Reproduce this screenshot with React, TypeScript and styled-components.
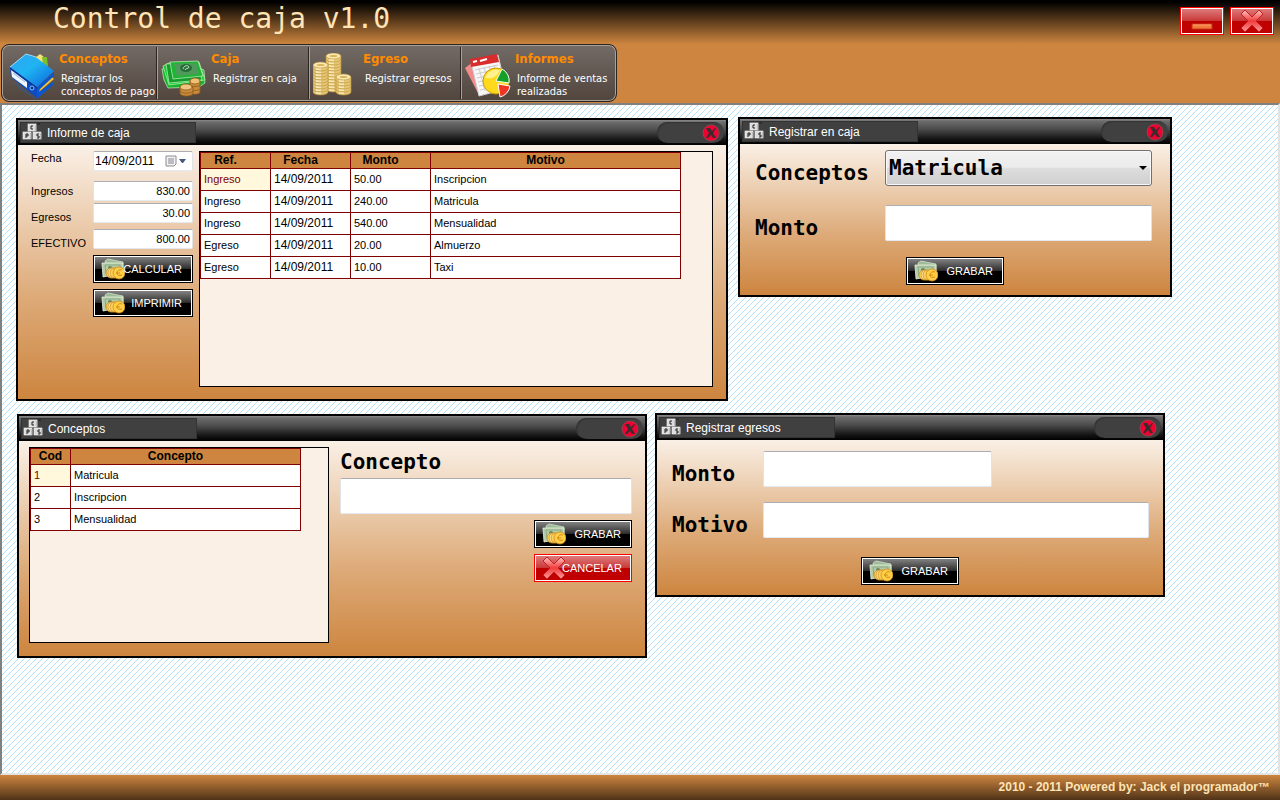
import React, { useState } from "react";
import styled, { createGlobalStyle } from "styled-components";

const peru = "#cd853f";
const linen = "#faf0e6";
const maroon = "#800000";
const sans = '"Liberation Sans", Arial, sans-serif';
const mono = '"DejaVu Sans Mono", Consolas, monospace';
const condensed = '"DejaVu Sans Condensed", Tahoma, "Open Sans", sans-serif';

const Global = createGlobalStyle`
  * { box-sizing: border-box; }
  body { margin: 0; background: ${peru}; font: 11px/14px ${sans}; color: #000; }
  button, input, select { font: inherit; color: inherit; margin: 0; }
  h1, h2, p { margin: 0; font-weight: normal; }
`;

const Page = styled.div`
  min-height: 100vh;
  display: flex;
  flex-direction: column;
`;

const Header = styled.header`
  background: linear-gradient(#000 0, #000 2px, ${peru} 44px);
`;

const TitleRow = styled.div`
  display: flex;
  justify-content: space-between;
  align-items: flex-start;
  height: 44px;
  padding: 0 6px 0 53px;
`;

const AppTitle = styled.h1`
  font: 28px/38px ${mono};
  color: #ffe4b5;
`;

const WindowControls = styled.div`
  display: flex;
  gap: 6px;
  padding-top: 7px;
`;

const glossyRed = "linear-gradient(#df8080 0, #cb3a3a 48%, #bf0000 50%, #c00000 100%)";
const glossyBlack = "linear-gradient(#8a8a8a 0, #2e2e2e 48%, #000 50%, #000 100%)";

const ControlButton = styled.button`
  width: 44px;
  height: 28px;
  padding: 0;
  border: 1px solid #f00;
  background: ${glossyRed};
  box-shadow: inset 0 0 0 1px #fff;
  display: flex;
  align-items: center;
  justify-content: center;
`;

const Toolbar = styled.nav`
  display: flex;
  width: fit-content;
  height: 58px;
  margin: 0 0 1px 1px;
  border: 1px solid #2c2420;
  border-radius: 8px;
  box-shadow: inset 0 0 0 1px #a8a09b;
  background: linear-gradient(#736b66, #51453d);
  padding: 2px 4px 2px 2px;
`;

const ToolItem = styled.button`
  display: flex;
  width: 152px;
  padding: 4px 0 0 5px;
  border: 0;
  background: none;
  text-align: left;
  & + & {
    border-left: 1px solid #2c2420;
    box-shadow: inset 1px 0 0 #a8a09b;
    padding-left: 4px;
  }
  svg { flex: none; margin-top: 2px; }
`;

const ToolText = styled.span`
  display: flex;
  flex-direction: column;
  padding-left: 4px;
`;

const ToolTitle = styled.span`
  font: bold 13px/16px ${condensed};
  color: #ff8c00;
`;

const ToolDescription = styled.span`
  font: 11px/13px ${condensed};
  color: #fff;
  padding: 5px 0 0 2px;
  white-space: pre;
`;

const Desktop = styled.main`
  position: relative;
  flex: 1;
  min-height: 560px;
  border: 2px solid;
  border-color: #808080 #e3e3e3 #e3e3e3 #808080;
  background: linear-gradient(135deg, #fff 0 47%, #b4e1fa 47% 53%, #fff 53%) 0 0 / 6px 6px;
`;

const Footer = styled.footer`
  padding: 0 10px;
  text-align: right;
  font: bold 12px/25px ${sans};
  color: #ffe4b5;
  background: linear-gradient(${peru}, #4f3318);
`;

const Frame = styled.section<{ $x: number; $y: number; $w: number; $h: number }>`
  position: absolute;
  left: ${(p) => p.$x}px;
  top: ${(p) => p.$y}px;
  width: ${(p) => p.$w}px;
  height: ${(p) => p.$h}px;
  display: flex;
  flex-direction: column;
  border: 2px solid #000;
  background: ${peru};
`;

const TitleBar = styled.div`
  display: flex;
  justify-content: space-between;
  flex: none;
  height: 25px;
  padding: 2px;
  background: linear-gradient(#8a8a8a 0, #6c6c6c 2px, #4c4c4c 10px, #141414 20px, #000 25px);
`;

const TitleTab = styled.div`
  display: flex;
  gap: 5px;
  width: 176px;
  padding: 0 0 0 1px;
  border: 1px solid #333;
  background: #404040;
`;

const FrameTitle = styled.h2`
  font: 12px/21px ${sans};
  color: #fff;
`;

const ClosePill = styled.div`
  display: flex;
  justify-content: flex-end;
  width: 67px;
  padding: 2px 4px;
  border-radius: 11px;
  background: #404040;
  box-shadow: inset 1px 1px 1px #333;
`;

const CloseButton = styled.button`
  width: 18px;
  height: 18px;
  padding: 0;
  border: 0;
  background: none;
  svg { display: block; }
`;

const Body = styled.div<{ $pad: string; $gap?: number }>`
  flex: 1;
  display: flex;
  align-items: flex-start;
  gap: ${(p) => p.$gap ?? 0}px;
  padding: ${(p) => p.$pad};
  background: linear-gradient(${linen}, #ddaa78 60%, ${peru});
`;

const LabelColumn = styled.div`
  display: grid;
  grid-template-rows: 33px 26px 26px 26px;
  width: 62px;
`;

const ControlColumn = styled.div`
  display: flex;
  flex-direction: column;
  gap: 6px;
  width: 100px;
  margin-right: 6px;
`;

const Pair = styled.div`
  display: flex;
  flex-direction: column;
  gap: 2px;
  padding-top: 4px;
`;

const TextField = styled.input<{ $big?: boolean; $width?: number }>`
  width: ${(p) => (p.$width ? p.$width + "px" : "100%")};
  height: ${(p) => (p.$big ? 36 : 20)}px;
  padding: 0 2px;
  border: 1px solid;
  border-color: #abadb3 #e2e3ea #e3e9ef #e2e3ea;
  border-radius: 2px;
  background: #fff;
  font: ${(p) => (p.$big ? `bold 21px ${mono}` : `11px ${sans}`)};
  text-align: ${(p) => (p.$big ? "left" : "right")};
`;

const DateBox = styled.div`
  display: flex;
  align-items: center;
  height: 20px;
  border: 1px solid;
  border-color: #abadb3 #e2e3ea #e3e9ef #e2e3ea;
  border-radius: 2px;
  background: #fff;
`;

const DateInput = styled.input`
  width: 71px;
  padding: 0 0 0 1px;
  border: 0;
  background: none;
  font: 12px ${sans};
`;

const DateButton = styled.button`
  padding: 0;
  border: 0;
  background: none;
  svg { display: block; }
`;

const ActionButton = styled.button<{ $danger?: boolean; $wide?: boolean }>`
  display: flex;
  align-items: center;
  justify-content: space-between;
  flex: none;
  width: ${(p) => (p.$wide ? 100 : 98)}px;
  height: 28px;
  padding: 0 10px 0 7px;
  border: 1px solid ${(p) => (p.$danger ? "#f00" : "#000")};
  background: ${(p) => (p.$danger ? glossyRed : glossyBlack)};
  box-shadow: inset 0 0 0 1px #fff;
  color: #fff;
  font: 11px/26px ${sans};
  svg { flex: none; margin-right: -4px; }
`;

const GridPanel = styled.div<{ $h: number }>`
  flex: 1;
  height: ${(p) => p.$h}px;
  border: 1px solid #000;
  background: ${linen};
`;

const Table = styled.table`
  border-collapse: collapse;
  table-layout: fixed;
  width: min-content;
`;

const Th = styled.th<{ $w: number }>`
  width: ${(p) => p.$w}px;
  height: 16px;
  padding: 0 ${(p) => (p.$w > 40 ? 20 : 0)}px 0 0;
  border: 1px solid ${maroon};
  background: ${peru};
  font: bold 12px/15px ${sans};
`;

const Td = styled.td<{ $current?: boolean }>`
  height: 22px;
  padding: 0 3px;
  border: 1px solid ${maroon};
  background: ${(p) => (p.$current ? "#fff8dc" : "#fff")};
  color: ${(p) => (p.$current ? maroon : "#000")};
  font-size: 11px;
  line-height: 21px;
`;

const DateText = styled.span`
  font-size: 12px;
`;

const FormColumn = styled.div<{ $gap: number }>`
  flex: 1;
  display: flex;
  flex-direction: column;
  gap: ${(p) => p.$gap}px;
`;

const FormRow = styled.div<{ $top?: number }>`
  display: flex;
  align-items: flex-end;
  padding-top: ${(p) => p.$top ?? 0}px;
`;

const BigLabel = styled.label<{ $w?: number; $tall?: boolean }>`
  flex: none;
  width: ${(p) => (p.$w ? p.$w + "px" : "auto")};
  font: bold 21px/${(p) => (p.$tall ? 31 : 26)}px ${mono};
`;

const ButtonRow = styled.div<{ $indent: number; $top?: number }>`
  padding: ${(p) => p.$top ?? 0}px 0 0 ${(p) => p.$indent}px;
`;

const ConceptForm = styled.div`
  display: flex;
  flex-direction: column;
  width: 292px;
`;

const EndStack = styled.div`
  display: flex;
  flex-direction: column;
  align-items: flex-end;
  gap: 6px;
  padding-top: 6px;
`;

const SelectWrap = styled.div`
  flex: 1;
  display: grid;
  align-items: center;
  svg { grid-area: 1 / 1; justify-self: end; margin-right: 5px; pointer-events: none; }
`;

const BigSelect = styled.select`
  grid-area: 1 / 1;
  width: 100%;
  height: 36px;
  padding: 0 0 0 3px;
  appearance: none;
  border: 1px solid #707070;
  border-radius: 3px;
  background: linear-gradient(#f2f2f2 0, #ebebeb 48%, #dddddd 50%, #cfcfcf 100%);
  box-shadow: inset 0 0 0 1px #f8f8f8;
  font: bold 21px ${mono};
`;

/* ---------- drawings ---------- */

const BinderIcon = () => (
  <svg width="46" height="48" viewBox="0 0 46 48" aria-hidden>
    <defs>
      <linearGradient id="bd" x1="0" y1="0" x2="1" y2="1">
        <stop offset="0" stopColor="#2fa4f4" />
        <stop offset=".45" stopColor="#1fb4f2" />
        <stop offset="1" stopColor="#0b62dd" />
      </linearGradient>
    </defs>
    <path d="M22 8 31 1l4 3 3 12-8 4Z" fill="#f2e27a" />
    <path d="m33 4 5 0 1 11-4 2Z" fill="#7bbf2c" />
    <path d="m28 34 14-11 3 3-15 13Z" fill="#f1c232" />
    <path d="M1 14 28 34v11L2 24Z" fill="#0d4bc4" />
    <path d="M1 14 28 34v2L1 16Z" fill="#0a3796" />
    <path d="m2 17 16 12v6L3 24Z" fill="#eef5fc" />
    <path d="m4 20 12 9" stroke="#9db6d4" fill="none" />
    <path d="M28 34 45 19v4L31 36l-1 3 14-10v3L28 46Z" fill="#0b55cf" />
    <path d="M1 14 17 1l11 4 17 13-17 16Z" fill="url(#bd)" />
    <path d="M1 14 17 1l10 3" stroke="#9be0ff" fill="none" />
    <circle cx="23" cy="35" r="2" fill="#0a2f86" stroke="#7fc3ff" />
    <path d="m4 27 24 19v2L10 36Z" fill="#2a5fae" opacity=".35" />
  </svg>
);

const CashIcon = () => (
  <svg width="46" height="48" viewBox="0 0 46 48" aria-hidden>
    <g stroke="#c6efc2" strokeWidth=".7">
      <path d="m1 16 32-3 10 4 1 13-6 4-31 1-4-8Z" fill="#16b52b" />
      <path d="m2 13 6-3 30-1 6 18-36 5Z" fill="#12cf2b" />
      <path d="m5 11 31-2 5 18-33 3Z" fill="#169c2e" />
      <path d="m9 9 28-1 5 15-30 3Z" fill="#1fb534" />
    </g>
    <path d="m13 11 22-1 3 11-22 2Z" fill="#4f9a5b" />
    <ellipse cx="25" cy="15" rx="6" ry="4" fill="#276b39" />
    <path d="M22 16c1-4 5-4 6-2 0 2-4 1-4 3" stroke="#bde3bb" fill="none" />
    <g stroke="#8f5c1c" strokeWidth=".8">
      <path d="M29 28v11c0 3 10 3 10 0V28Z" fill="#c98a3c" />
      <ellipse cx="34" cy="28" rx="5" ry="3" fill="#efc177" />
      <path d="M29 32c1 2 9 2 10 0M29 36c1 2 9 2 10 0" fill="none" />
      <path d="M19 34v6c0 4 13 4 13 0v-6Z" fill="#c98a3c" />
      <ellipse cx="25" cy="34" rx="6" ry="3" fill="#f0c680" />
      <path d="M19 38c2 3 11 3 13 0" fill="none" />
    </g>
  </svg>
);

const CoinStack = ({ x, y, n }: { x: number; y: number; n: number }) => (
  <g stroke="#b8903a" strokeWidth=".6">
    {Array.from({ length: n }, (_, i) => (
      <g key={i}>
        <path d={`M${x} ${y - i * 3}v3c0 4 15 4 15 0v-3Z`} fill="#e6c673" />
        <path d={`M${x + 3} ${y - i * 3 + 4}h5`} stroke="#fffbe0" strokeWidth="1.2" />
      </g>
    ))}
    <ellipse cx={x + 7.5} cy={y - (n - 1) * 3} rx="7.5" ry="3" fill="#f9e9b0" />
    <ellipse cx={x + 7.5} cy={y - (n - 1) * 3} rx="4" ry="1" fill="#d9b35a" stroke="none" />
  </g>
);

const CoinsIcon = () => (
  <svg width="46" height="48" viewBox="0 0 46 48" aria-hidden>
    <CoinStack x={13} y={33} n={11} />
    <CoinStack x={0} y={36} n={9} />
    <CoinStack x={23} y={36} n={5} />
  </svg>
);

const ReportIcon = () => (
  <svg width="46" height="48" viewBox="0 0 46 48" aria-hidden>
    <path d="m0 15 8-6 12 30-6 3Z" fill="#f28b8b" />
    <path d="m6 9 27-7 8 34-27 7Z" fill="#f7f7f7" stroke="#cfcfcf" />
    <path d="m5 6 27-5 2 8-28 5Z" fill="#d92c2c" />
    <path d="m8 9 4-1M15 8l7-2" stroke="#fff" strokeWidth="2" />
    <g stroke="#cccccc" fill="none">
      <path d="m10 17 23-5M11 21l23-5M12 25l23-5M13 29l8-2M14 33l5-1M15 37l5-1M14 15l6 23M19 14l3 11M24 13l2 6M29 12l1 6" />
    </g>
    <circle cx="31" cy="28" r="13" fill="#ffd91c" stroke="#d39a08" />
    <path d="M20 25a12 12 0 0 1 15-8c-4 8-8 9-15 8Z" fill="#fff6a8" opacity=".8" />
    <path d="M31 28 37 16a13 13 0 0 1 7 14Z" fill="#13a02a" stroke="#f4fff4" />
    <path d="m33 31 12 2a13 13 0 0 1-10 11Z" fill="#ee3524" stroke="#fff" />
  </svg>
);

const MoneyIcon = () => (
  <svg width="24" height="22" viewBox="0 0 24 22" aria-hidden>
    <path d="m4 3 3-2 15 3 0 8-17-2Z" fill="#9dbb96" stroke="#dbe8d2" strokeWidth=".7" />
    <path d="m1 5 21 0 0 10-20 4Z" fill="#b3cca6" stroke="#e9f2e0" strokeWidth=".8" />
    <path d="m4 7 15 0 0 6-14 3Z" fill="none" stroke="#8aa888" />
    <circle cx="9" cy="10" r="2" fill="#5f8465" />
    <g stroke="#d18c1c" strokeWidth=".8">
      <circle cx="10" cy="15" r="5" fill="#fbd35c" />
      <circle cx="12" cy="15" r="5" fill="#fff0a8" />
      <circle cx="14" cy="15" r="5" fill="#fbd35c" />
      <ellipse cx="18" cy="15" rx="6" ry="6" fill="#ffcf48" />
    </g>
    <path d="M21 12c-3-1-5 1-5 3s2 3 5 2M15 15h4" fill="none" stroke="#d48a10" />
  </svg>
);

const CrossIcon = () => (
  <svg width="24" height="24" viewBox="0 0 24 24" aria-hidden>
    <defs>
      <linearGradient id="cr" x1="0" y1="0" x2="0" y2="1">
        <stop offset="0" stopColor="#ffc4c4" />
        <stop offset=".5" stopColor="#f03c3c" />
        <stop offset="1" stopColor="#ff9a9a" />
      </linearGradient>
    </defs>
    <path
      d="M5 1 12 8l7-7 4 4-7 7 7 7-4 4-7-7-7 7-4-4 7-7-7-7Z"
      fill="url(#cr)"
      stroke="#c22020"
      strokeLinejoin="round"
    />
  </svg>
);

const MinusIcon = () => (
  <svg width="22" height="20" viewBox="0 0 22 20" aria-hidden>
    <rect x="1" y="13" width="20" height="5" fill="#f47a3c" stroke="#c2371c" />
    <path d="M2 14h18" stroke="#ffa070" />
  </svg>
);

const BlocksIcon = () => (
  <svg width="20" height="17" viewBox="0 0 20 17" aria-hidden>
    <g fill="#dcdcdc" stroke="#f8f8f8" strokeWidth=".6">
      <rect x="6" y="1" width="8" height="7" />
      <rect x="1" y="9" width="8" height="7" />
      <rect x="11" y="9" width="8" height="7" />
    </g>
    <path d="M14 2v6M9 10v6M19 10v6" stroke="#9a9a9a" />
    <g fill="none" stroke="#222">
      <path d="M11 3H9v3h2M4 15v-4h2v2H4M17 11h-2v2h2v2h-2" />
    </g>
    <path d="M15 1h3" stroke="#1c1c1c" />
  </svg>
);

const CloseBall = () => (
  <svg width="18" height="18" viewBox="0 0 18 18" aria-hidden>
    <circle cx="9" cy="9" r="8" fill="#f00230" stroke="#8d4450" />
    <path d="M4 4h4l2 3 3-3h1l-3 5 3 5h-3l-2-3-3 3H4l3-5Z" fill="#3b2a2e" />
  </svg>
);

const CalendarIcon = () => (
  <svg width="22" height="12" viewBox="0 0 22 12" aria-hidden>
    <path d="M1 1h10v8l-2 2H1Z" fill="#f2f2f2" stroke="#8c8c8c" />
    <path d="M3 4h6M3 6h6M3 8h6M4 3v6M6 3v6M8 3v6" stroke="#a9a9b5" />
    <path d="M14 4h7l-3 4h-1Z" fill="#44597a" />
  </svg>
);

const DropArrow = () => (
  <svg width="8" height="5" viewBox="0 0 8 5" aria-hidden>
    <path d="M0 0h8L4 4Z" fill="#000" />
  </svg>
);

/* ---------- windows ---------- */

type WindowProps = {
  title: string;
  x: number;
  y: number;
  w: number;
  h: number;
  children: React.ReactNode;
};

const MdiWindow = ({ title, x, y, w, h, children }: WindowProps) => (
  <Frame $x={x} $y={y} $w={w} $h={h} aria-label={title}>
    <TitleBar>
      <TitleTab>
        <BlocksIcon />
        <FrameTitle>{title}</FrameTitle>
      </TitleTab>
      <ClosePill>
        <CloseButton type="button" aria-label="Cerrar">
          <CloseBall />
        </CloseButton>
      </ClosePill>
    </TitleBar>
    {children}
  </Frame>
);

const movements = [
  ["Ingreso", "14/09/2011", "50.00", "Inscripcion"],
  ["Ingreso", "14/09/2011", "240.00", "Matricula"],
  ["Ingreso", "14/09/2011", "540.00", "Mensualidad"],
  ["Egreso", "14/09/2011", "20.00", "Almuerzo"],
  ["Egreso", "14/09/2011", "10.00", "Taxi"],
];

const concepts = [
  ["1", "Matricula"],
  ["2", "Inscripcion"],
  ["3", "Mensualidad"],
];

const tools = [
  { title: "Conceptos", text: "Registrar los\nconceptos de pago", icon: <BinderIcon /> },
  { title: "Caja", text: "Registrar en caja", icon: <CashIcon /> },
  { title: "Egreso", text: "Registrar egresos", icon: <CoinsIcon /> },
  { title: "Informes", text: "Informe de ventas\nrealizadas", icon: <ReportIcon /> },
];

type DataGridProps = {
  height: number;
  columns: { name: string; width: number }[];
  rows: string[][];
};

const DataGrid = ({ height, columns, rows }: DataGridProps) => (
  <GridPanel $h={height}>
    <Table>
      <thead>
        <tr>
          {columns.map((c) => (
            <Th key={c.name} $w={c.width}>{c.name}</Th>
          ))}
        </tr>
      </thead>
      <tbody>
        {rows.map((r, i) => (
          <tr key={i}>
            {r.map((v, j) => (
              <Td key={j} $current={i === 0 && j === 0}>
                {v.includes("/") ? <DateText>{v}</DateText> : v}
              </Td>
            ))}
          </tr>
        ))}
      </tbody>
    </Table>
  </GridPanel>
);

export default function App() {
  const [date, setDate] = useState("14/09/2011");
  return (
    <Page>
      <Global />
      <Header>
        <TitleRow>
          <AppTitle>Control de caja v1.0</AppTitle>
          <WindowControls>
            <ControlButton type="button" aria-label="Minimizar"><MinusIcon /></ControlButton>
            <ControlButton type="button" aria-label="Cerrar"><CrossIcon /></ControlButton>
          </WindowControls>
        </TitleRow>
        <Toolbar>
          {tools.map((t) => (
            <ToolItem type="button" key={t.title}>
              {t.icon}
              <ToolText>
                <ToolTitle>{t.title}</ToolTitle>
                <ToolDescription>{t.text}</ToolDescription>
              </ToolText>
            </ToolItem>
          ))}
        </Toolbar>
      </Header>

      <Desktop>
        <MdiWindow title="Informe de caja" x={14} y={13} w={712} h={283}>
          <Body $pad="6px 13px 12px">
            <LabelColumn>
              <label htmlFor="fecha">Fecha</label>
              <label htmlFor="ingresos">Ingresos</label>
              <label htmlFor="egresos">Egresos</label>
              <label htmlFor="efectivo">EFECTIVO</label>
            </LabelColumn>
            <ControlColumn>
              <DateBox>
                <DateInput id="fecha" value={date} onChange={(e) => setDate(e.target.value)} />
                <DateButton type="button" aria-label="Abrir calendario"><CalendarIcon /></DateButton>
              </DateBox>
              <Pair>
                <TextField id="ingresos" defaultValue="830.00" />
                <TextField id="egresos" defaultValue="30.00" />
              </Pair>
              <TextField id="efectivo" defaultValue="800.00" />
              <ActionButton type="button" $wide><MoneyIcon />CALCULAR</ActionButton>
              <ActionButton type="button" $wide><MoneyIcon />IMPRIMIR</ActionButton>
            </ControlColumn>
            <DataGrid
              height={236}
              columns={[
                { name: "Ref.", width: 70 },
                { name: "Fecha", width: 80 },
                { name: "Monto", width: 80 },
                { name: "Motivo", width: 250 },
              ]}
              rows={movements}
            />
          </Body>
        </MdiWindow>

        <MdiWindow title="Registrar en caja" x={736} y={12} w={434} h={180}>
          <Body $pad="6px 18px 10px 15px">
            <FormColumn $gap={16}>
              <FormRow>
                <BigLabel $w={130} htmlFor="conceptos">Conceptos</BigLabel>
                <SelectWrap>
                  <BigSelect id="conceptos" defaultValue="Matricula">
                    {concepts.map(([id, name]) => (
                      <option key={id}>{name}</option>
                    ))}
                  </BigSelect>
                  <DropArrow />
                </SelectWrap>
              </FormRow>
              <FormRow $top={3}>
                <BigLabel $w={130} htmlFor="monto-caja">Monto</BigLabel>
                <TextField id="monto-caja" $big />
              </FormRow>
              <ButtonRow $indent={151}>
                <ActionButton type="button"><MoneyIcon />GRABAR</ActionButton>
              </ButtonRow>
            </FormColumn>
          </Body>
        </MdiWindow>

        <MdiWindow title="Conceptos" x={15} y={309} w={630} h={244}>
          <Body $pad="6px 13px 13px 10px" $gap={11}>
            <DataGrid
              height={196}
              columns={[
                { name: "Cod", width: 40 },
                { name: "Concepto", width: 230 },
              ]}
              rows={concepts}
            />
            <ConceptForm>
              <BigLabel $tall htmlFor="concepto">Concepto</BigLabel>
              <TextField id="concepto" $big />
              <EndStack>
                <ActionButton type="button"><MoneyIcon />GRABAR</ActionButton>
                <ActionButton type="button" $danger><CrossIcon />CANCELAR</ActionButton>
              </EndStack>
            </ConceptForm>
          </Body>
        </MdiWindow>

        <MdiWindow title="Registrar egresos" x={653} y={308} w={510} h={184}>
          <Body $pad="11px 14px 10px 15px">
            <FormColumn $gap={15}>
              <FormRow>
                <BigLabel $w={91} htmlFor="monto-egreso">Monto</BigLabel>
                <TextField id="monto-egreso" $big $width={229} />
              </FormRow>
              <FormRow>
                <BigLabel $w={91} htmlFor="motivo">Motivo</BigLabel>
                <TextField id="motivo" $big />
              </FormRow>
              <ButtonRow $indent={189} $top={4}>
                <ActionButton type="button"><MoneyIcon />GRABAR</ActionButton>
              </ButtonRow>
            </FormColumn>
          </Body>
        </MdiWindow>
      </Desktop>

      <Footer>2010 - 2011 Powered by: Jack el programador™</Footer>
    </Page>
  );
}
